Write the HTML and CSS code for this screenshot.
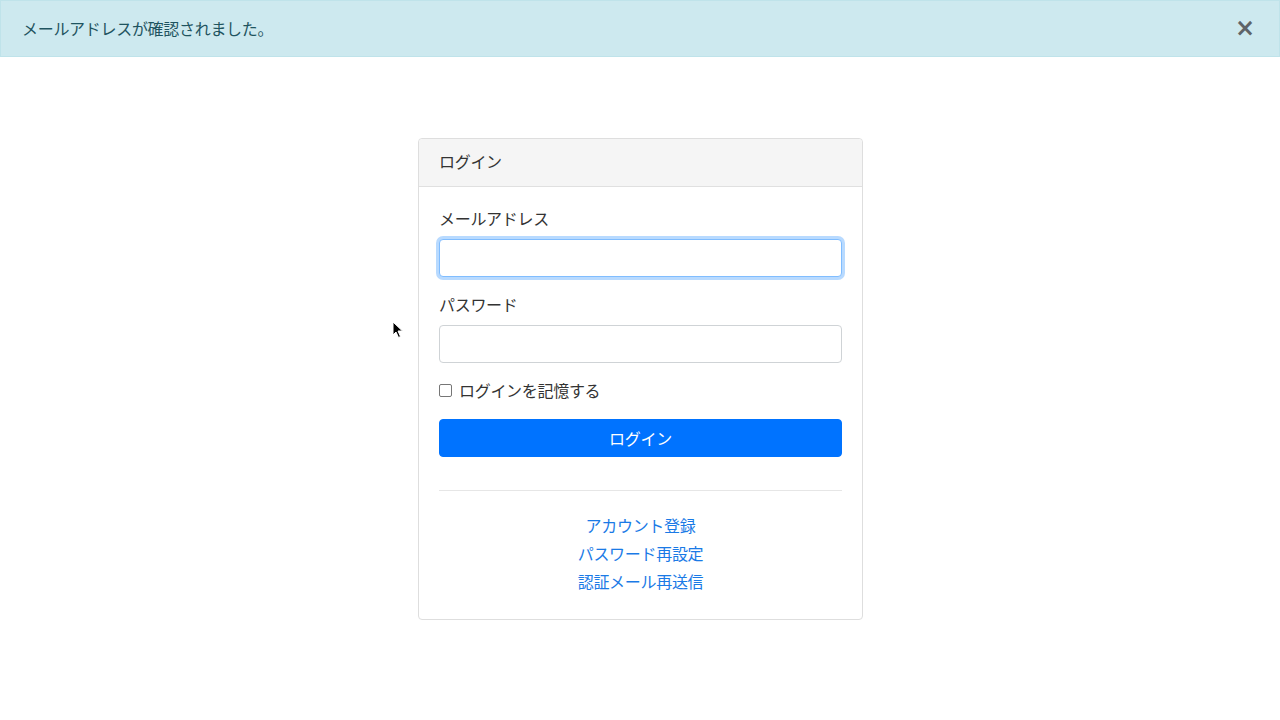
FILE: index.html
```html
<!DOCTYPE html>
<html lang="ja">
<head>
<meta charset="utf-8">
<title>ログイン</title>
<link rel="stylesheet" href="styles.css">
</head>
<body>
<div class="alert">
  <span class="alert-text">メールアドレスが確認されました。</span>
  <button class="close" type="button" aria-label="閉じる">×</button>
</div>
<main class="container">
  <div class="card">
    <div class="card-header">ログイン</div>
    <div class="card-body">
      <div class="form-group">
        <label class="label" for="email">メールアドレス</label>
        <input class="input focus" id="email" type="email">
      </div>
      <div class="form-group">
        <label class="label" for="password">パスワード</label>
        <input class="input" id="password" type="password">
      </div>
      <div class="form-group check">
        <span class="checkbox"></span>
        <span class="check-label">ログインを記憶する</span>
      </div>
      <div class="form-group">
        <button class="btn" type="button">ログイン</button>
      </div>
      <hr class="divider">
      <div class="links">
        <a href="#">アカウント登録</a>
        <a href="#">パスワード再設定</a>
        <a href="#">認証メール再送信</a>
      </div>
    </div>
  </div>
</main>
<svg class="cursor" width="12" height="18" viewBox="0 0 12 18">
  <path d="M1 1 L1 14 L4 11 L6.5 16.5 L8.5 15.5 L6 10 L10.5 10 Z" fill="#000" stroke="#fff" stroke-width="1"/>
</svg>
</body>
</html>
```

FILE: styles.css
```css
* { box-sizing: border-box; }
html, body { margin: 0; padding: 0; }
body {
  background: #fff;
  font-family: "Noto Sans CJK JP", "Noto Sans", sans-serif;
  font-size: 16px;
  line-height: 24px;
  color: #333;
  width: 1280px;
  height: 720px;
  position: relative;
  overflow: hidden;
  letter-spacing: -0.3px;
}
.alert {
  height: 57px;
  background: #cde9ef;
  border: 1px solid #bfe3ea;
  display: flex;
  align-items: center;
  justify-content: space-between;
  padding: 0 24px 2px 21px;
  color: #1f5460;
}
.close {
  background: none;
  border: none;
  padding: 0;
  font-family: "DejaVu Sans", sans-serif;
  font-size: 24px;
  font-weight: bold;
  color: #5e6468;
  line-height: 24px;
}
.container {
  display: flex;
  justify-content: center;
  padding-top: 81px;
  padding-left: 1px;
}
.card {
  width: 445px;
  border: 1px solid #dedede;
  border-radius: 4px;
  background: #fff;
}
.card-header {
  background: #f5f5f5;
  border-bottom: 1px solid #e0e0e0;
  padding: 10px 20px 13px;
  height: 48px;
  border-radius: 4px 4px 0 0;
}
.card-body {
  padding: 19px 20px 24px 20px;
}
.form-group { margin-bottom: 16px; }
.form-group:first-child { margin-bottom: 15px; }
.label {
  display: block;
  margin-bottom: 9px;
}
.input {
  display: block;
  width: 100%;
  height: 38px;
  border: 1px solid #cfd3d6;
  border-radius: 4px;
  background: #fff;
  font-size: 16px;
  padding: 6px 12px;
  outline: none;
}
.input.focus {
  border-color: #80bdff;
  box-shadow: 0 0 0 3px rgba(0, 123, 255, 0.28);
}
.check {
  display: flex;
  align-items: center;
  height: 24px;
  position: relative;
  top: -1px;
}
.checkbox {
  width: 13px;
  height: 13px;
  border: 1px solid #767676;
  border-radius: 2px;
  background: #fff;
  margin-right: 7px;
}
.btn {
  display: block;
  width: 100%;
  height: 38px;
  border: 1px solid #0073ff;
  background: #0073ff;
  color: #fff;
  border-radius: 4px;
  font-family: inherit;
  font-size: 16px;
  line-height: 24px;
  letter-spacing: -0.3px;
  padding-bottom: 2px;
}
.divider {
  border: 0;
  border-top: 1px solid #e6e6e6;
  margin: 33px 0 20px 0;
}
.links {
  display: flex;
  flex-direction: column;
  align-items: center;
}
.links a {
  color: #1a7ae6;
  text-decoration: none;
  line-height: 28px;
}
.cursor {
  position: absolute;
  left: 392px;
  top: 321px;
}
```
